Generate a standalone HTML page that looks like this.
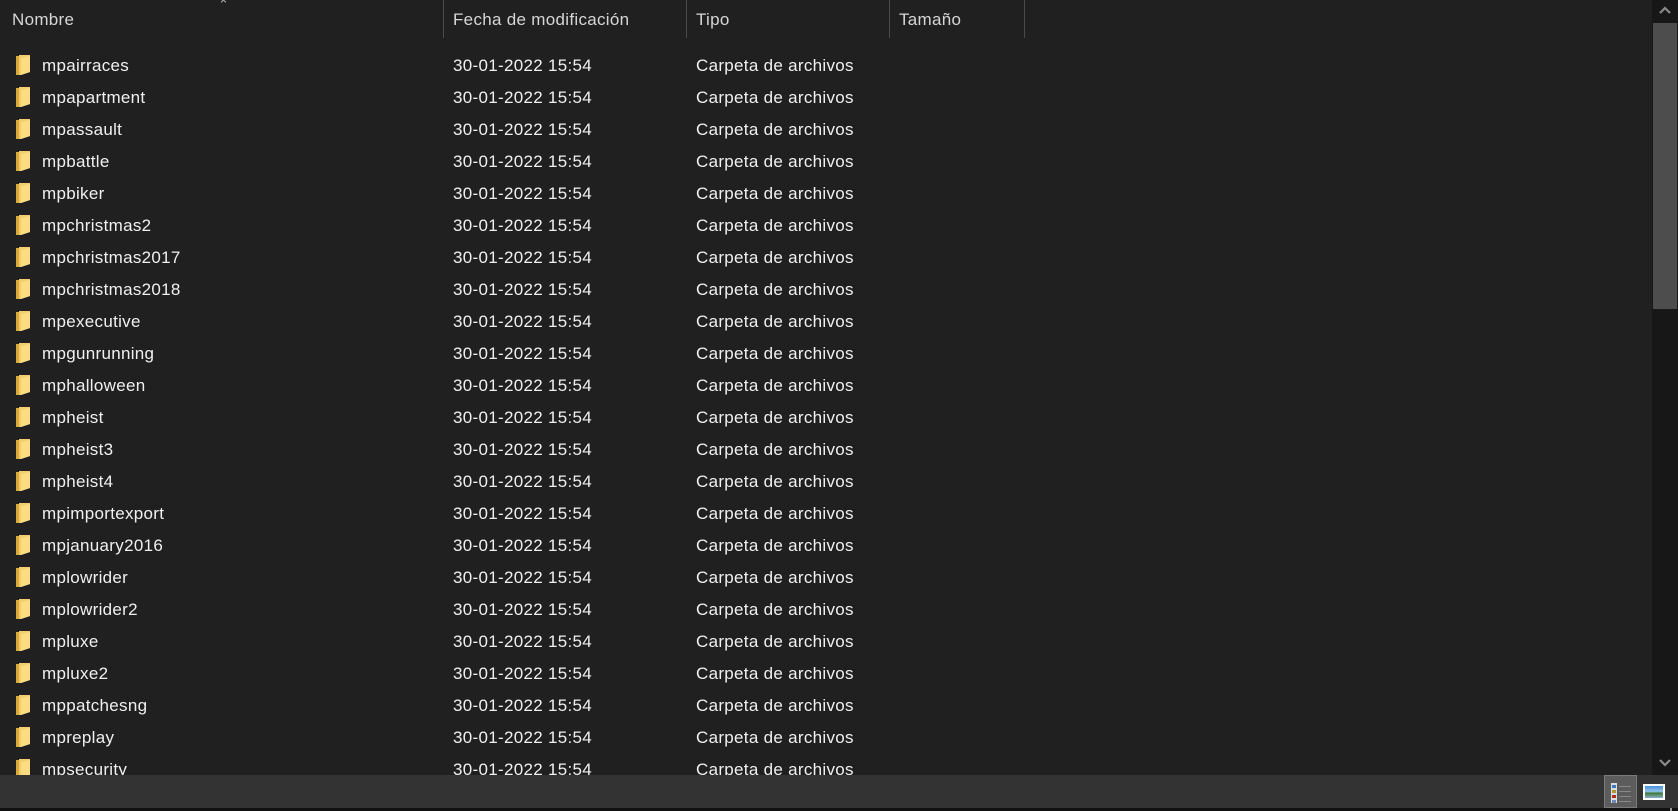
<!DOCTYPE html>
<html><head><meta charset="utf-8"><style>
*{margin:0;padding:0;box-sizing:border-box}
body{width:1678px;height:811px;background:#202020;overflow:hidden;position:relative;font-family:"Segoe UI","Liberation Sans",sans-serif;color:#f0f0f0;font-size:17px;letter-spacing:0.3px}
.h{position:absolute;top:1px;height:38px;line-height:38px;color:#d6d6d6}
.dv{position:absolute;top:0;width:1px;height:38px;background:#4a4a4a}
.row{position:absolute;left:0;height:32px;line-height:32px;width:1652px}
.row span{position:absolute;top:0}
.row svg{position:absolute;left:16px;top:5px}
.sb{position:absolute;left:1652px;top:0;width:26px;height:775px;background:#171717}
.thumb{position:absolute;left:1653px;top:23px;width:24px;height:286px;background:#4d4d4d}
.status{position:absolute;left:0;top:775px;width:1678px;height:33px;background:#333}
.bl{position:absolute;left:0;top:808px;width:1678px;height:3px;background:#111}
</style></head><body>
<div class="h" style="left:12px">Nombre</div>
<div style="position:absolute;left:218px;top:-3px;color:#aaa;font-size:13px">&#8963;</div>
<div class="dv" style="left:443px"></div>
<div class="h" style="left:453px">Fecha de modificación</div>
<div class="dv" style="left:686px"></div>
<div class="h" style="left:696px">Tipo</div>
<div class="dv" style="left:889px"></div>
<div class="h" style="left:899px">Tamaño</div>
<div class="dv" style="left:1024px"></div>
<div id="rows"></div>
<script>
var n=["mpairraces","mpapartment","mpassault","mpbattle","mpbiker","mpchristmas2","mpchristmas2017","mpchristmas2018","mpexecutive","mpgunrunning","mphalloween","mpheist","mpheist3","mpheist4","mpimportexport","mpjanuary2016","mplowrider","mplowrider2","mpluxe","mpluxe2","mppatchesng","mpreplay","mpsecurity"];
var h="";
n.forEach(function(s,i){var t=50+i*32;
h+='<div class="row" style="top:'+t+'px"><svg width="15" height="20" viewBox="0 0 15 20"><path d="M0 1h5v19H0z" fill="#d9a93a"/><path d="M3 0h11v17l-9 3H3z" fill="#f3cd6a"/><path d="M5 3l9-2v16l-9 3z" fill="#fbdc83"/></svg><span style="left:42px">'+s+'</span><span style="left:453px">30-01-2022 15:54</span><span style="left:696px">Carpeta de archivos</span></div>';});
document.getElementById('rows').innerHTML=h;
</script>
<div class="sb"></div>
<div class="thumb"></div>
<svg style="position:absolute;left:1659px;top:6px" width="12" height="9" viewBox="0 0 12 9"><path d="M1 7l5-5 5 5" stroke="#8a8a8a" stroke-width="2.2" fill="none"/></svg>
<svg style="position:absolute;left:1659px;top:758px" width="12" height="9" viewBox="0 0 12 9"><path d="M1 2l5 5 5-5" stroke="#8a8a8a" stroke-width="2.2" fill="none"/></svg>
<div class="status"></div>
<div style="position:absolute;left:1604px;top:775px;width:33px;height:33px;background:#5c5c5c;border:1px solid #7a7a7a">
<div style="position:absolute;left:6px;top:7px;width:6px;height:20px;background:#ddd"></div>
<div style="position:absolute;left:7px;top:9px;width:4px;height:3px;background:#3a7ab8"></div>
<div style="position:absolute;left:7px;top:14px;width:4px;height:3px;background:#a89a30"></div>
<div style="position:absolute;left:7px;top:19px;width:4px;height:3px;background:#b03020"></div>
<div style="position:absolute;left:7px;top:24px;width:4px;height:3px;background:#6a8ab8"></div>
<div style="position:absolute;left:14px;top:10px;width:12px;height:16px;background:repeating-linear-gradient(#888 0 1px,transparent 1px 5px)"></div>
</div>
<div style="position:absolute;left:1643px;top:784px;width:22px;height:16px;background:#fff;padding:2px">
<div style="width:18px;height:12px;background:linear-gradient(#4a90d8,#8ec4ee 45%,#3f7a3a 60%,#8ab0c8)"></div></div>
<div class="bl"></div>
<div style="position:absolute;left:1670px;top:808px;width:2px;height:3px;background:#999"></div>
</body></html>
